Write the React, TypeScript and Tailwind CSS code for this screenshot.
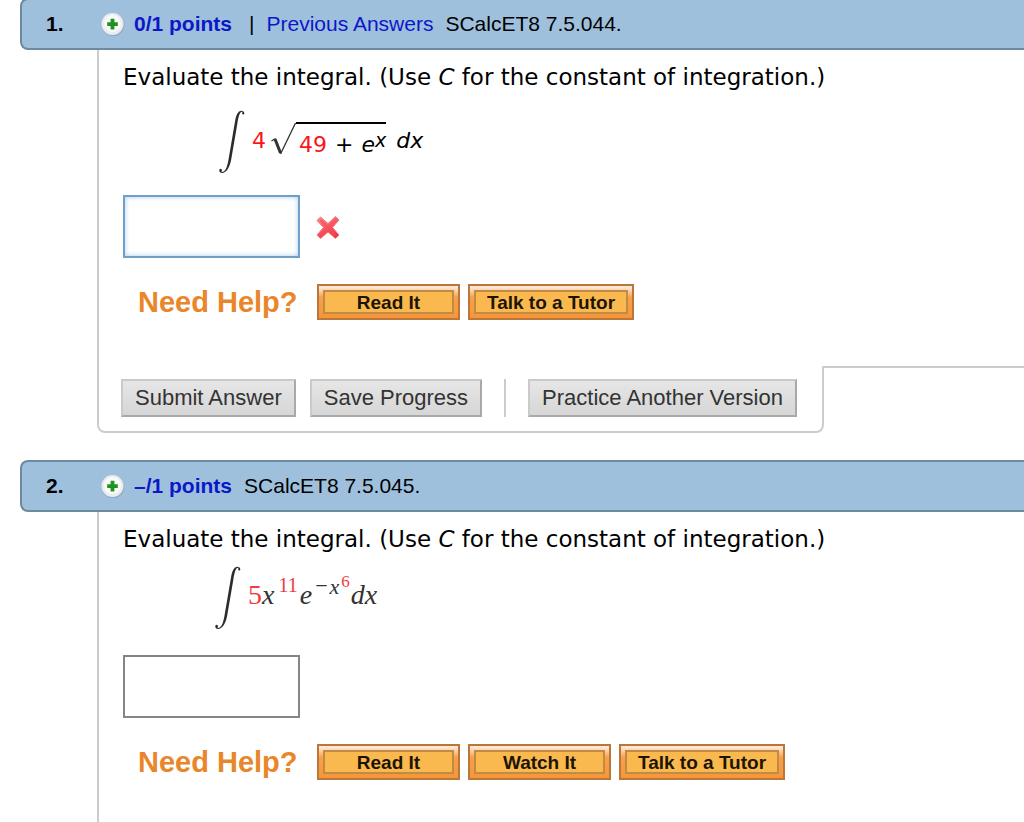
import React from "react";

function PlusBadge({ label }: { label: string }) {
  return (
    <button type="button" aria-label={label} className="block h-6 w-6 shrink-0">
      <svg viewBox="0 0 24 24" className="h-6 w-6">
        <circle cx="12" cy="13" r="11.3" fill="#7e99b0" opacity="0.55" />
        <circle cx="11.5" cy="12" r="11" fill="#ececec" />
        <circle cx="11.5" cy="11.5" r="8.5" fill="#fafafa" />
        <path d="M9.600 6.800h3.800v3.400h3.400v3.800h-3.400v3.400h-3.800v-3.400H6.200v-3.800h3.400z" fill="#1e931e" />
      </svg>
    </button>
  );
}

function Header({ number, children }: { number: string; children: React.ReactNode }) {
  return (
    <header className="ml-5 flex h-[52px] items-center rounded-l-lg border-2 border-r-0 border-[#6e8a9d] bg-[#9fc0dd] text-[21px] whitespace-pre text-black">
      <h2 className="w-[79px] pl-6 font-bold">{number}</h2>
      <PlusBadge label={`Show details for question ${number}`} />
      <div className="flex pl-[9px]">{children}</div>
    </header>
  );
}

function Prompt() {
  return (
    <p className="font-['DejaVu_Sans',sans-serif] text-[23px] leading-[30px] whitespace-nowrap text-black">
      Evaluate the integral. (Use <i>C</i> for the constant of integration.)
    </p>
  );
}

function IntegralSign() {
  return (
    <svg viewBox="0 0 26 64" className="h-16 w-[26px] shrink-0" fill="#2c2c2c">
      <path d="M25.3 3.2C24.8 1.2 23.6.6 22 .8C18.500 1.300 17 6 16 11.500L9.600 49C8.600 55 7.200 60.500 4.300 61.800C3.500 62.100 2.600 61.900 2.400 61.300C3.300 60.700 3.300 59.200 2.100 58.900C.9 58.700.2 59.600.3 60.700C.5 62.400 2.100 63.200 3.900 62.900C8.500 62 10.900 56 12.200 49.500L18.300 14C19.200 8 20.300 3.200 22.200 2C22.800 1.700 23.300 1.700 23.600 2.100C22.900 2.700 22.800 4 23.800 4.400C24.700 4.700 25.300 4.100 25.300 3.200Z" />
    </svg>
  );
}

function RootSign() {
  return (
    <svg viewBox="0 0 25 34" className="h-[34px] w-[25px] shrink-0" fill="none">
      <path d="M.5 19L4.500 16.500" stroke="#333" strokeWidth="1.200" />
      <path d="M4 17L9.500 31" stroke="#333" strokeWidth="3" />
      <path d="M9.500 32L24.500 1" stroke="#333" strokeWidth="1.300" />
    </svg>
  );
}

function WrongMark() {
  return (
    <svg viewBox="0 0 24 26" className="h-[26px] w-6" role="img" aria-label="Incorrect">
      <defs>
        <linearGradient id="wrong" x1="0" y1="0" x2="0.5" y2="1">
          <stop offset="0" stopColor="#ff8e91" />
          <stop offset="1" stopColor="#ee3543" />
        </linearGradient>
      </defs>
      <path
        d="M4.500 3L12 9.500L19.500 2.500L23 6L16.500 13.500L23 21L19.500 24.500L12 18L4.500 24.500L1 21L7.500 13.500L1 6.500Z"
        fill="url(#wrong)"
        stroke="#f4757b"
        strokeLinejoin="round"
      />
      <path d="M5 6.500L19 21M19 6.500L5 21" stroke="#fb4d57" strokeWidth="2.500" strokeLinecap="round" opacity="0.6" />
    </svg>
  );
}

function HelpButton({ children, wide }: { children: string; wide?: boolean }) {
  return (
    <button
      type="button"
      className={`${wide ? "w-[166px]" : "w-[143px]"} h-9 shrink-0 border-2 border-[#b9783a] bg-linear-to-b from-[#fde6d2] from-5% via-[#f7a04a] via-35% to-[#f6963a] p-1`}
    >
      <span className="flex h-full items-center justify-center border-2 border-[#c08b45] bg-[#fab94f] pt-0.5 text-[19px] font-bold whitespace-nowrap text-[#1d1504]">
        {children}
      </span>
    </button>
  );
}

function NeedHelp({ options }: { options: string[] }) {
  return (
    <div className="mt-[26px] flex h-9 items-center gap-2">
      <span className="w-[186px] shrink-0 pl-[15px] text-[29px] leading-9 font-bold text-[#ea862a]">Need Help?</span>
      {options.map((o) => (
        <HelpButton key={o} wide={o === "Talk to a Tutor"}>
          {o}
        </HelpButton>
      ))}
    </div>
  );
}

function ActionButton({ children }: { children: string }) {
  return (
    <button
      type="button"
      className="h-[38px] shrink-0 border-2 border-t-[#c9cbca] border-r-[#a9a9a9] border-b-[#a9a9a9] border-l-[#c9cbca] bg-linear-to-b from-[#e6e6e6] to-[#d6d6d6] px-3 text-[22px] leading-8 whitespace-nowrap text-[#333]"
    >
      {children}
    </button>
  );
}

export default function App() {
  return (
    <main className="overflow-hidden bg-white font-['Liberation_Sans',Arial,sans-serif]">
      <section className="-mt-0.5">
        <Header number="1.">
          <span className="font-bold text-[#0b18c8]">0/1 points</span>
          <span className="pr-3 pl-[17px]">|</span>
          <a href="#previous" className="pr-3 text-[#0b18c8]">Previous Answers</a>
          <span>SCalcET8 7.5.044.</span>
        </Header>

        <div className="ml-[97px] border-l-2 border-[#cbcccc] pt-3 pb-[46px] pl-6">
          <Prompt />
          <div className="flex items-start pt-[18px] pl-24 font-['DejaVu_Sans',sans-serif] text-[22px] leading-[26px] text-black">
            <IntegralSign />
            <span className="pt-[18px] pl-[7px] text-[#fa1420]">4</span>
            <div className="flex pt-3 pl-[5px]">
              <RootSign />
              <div className="flex border-t-2 border-black pt-2 pl-[3px] whitespace-pre">
                <span className="text-[#fa1420]">49</span>
                <span className="px-px"> + </span>
                <i>e</i>
                <i className="-mt-[5px] text-[19px]">x</i>
              </div>
            </div>
            <i className="pt-[18px] pl-[10px]">dx</i>
          </div>
          <div className="mt-[21px] flex items-center gap-4">
            <input
              aria-label="Answer to question 1"
              className="h-[63px] w-[177px] border-2 border-[#709fc7] px-2 text-[22px] shadow-[inset_0_0_5px_#a9cdf0] outline-none"
            />
            <WrongMark />
          </div>
          <NeedHelp options={["Read It", "Talk to a Tutor"]} />
        </div>

        <div className="flex pl-[97px]">
          <div className="flex h-[67px] shrink-0 rounded-b-lg border-2 border-t-0 border-[#cbcccc] pt-[13px] pr-[25px] pl-[22px]">
            <ActionButton>Submit Answer</ActionButton>
            <div className="ml-[14px] flex">
              <ActionButton>Save Progress</ActionButton>
            </div>
            <div className="mx-[22px] h-[38px] border-l-2 border-[#cbcccc]" />
            <ActionButton>Practice Another Version</ActionButton>
          </div>
          <div className="-ml-0.5 flex-1 border-t-2 border-[#cbcccc]" />
        </div>
      </section>

      <section className="mt-[27px]">
        <Header number="2.">
          <span className="pr-3 font-bold text-[#0b18c8]">–/1 points</span>
          <span>SCalcET8 7.5.045.</span>
        </Header>

        <div className="ml-[97px] border-l-2 border-[#cbcccc] pt-3 pb-[42px] pl-6">
          <Prompt />
          <div className="flex items-start pt-3 pl-[92px] font-['Liberation_Serif',serif] text-[28px] leading-8 text-[#333]">
            <IntegralSign />
            <span className="pt-[13px] pl-[7px] text-[#f23a44]">5</span>
            <i className="pt-[13px]">x</i>
            <span className="pt-[7px] pl-1 text-[20px] leading-6 text-[#f23a44]">11</span>
            <i className="pt-[13px] pl-0.5">e</i>
            <span className="pt-2 pl-[3px] text-[22px] leading-6">−</span>
            <i className="pt-[9px] pl-0.5 text-[22px] leading-6">x</i>
            <span className="pt-[6px] pl-0.5 text-[17px] leading-5 text-[#f23a44]">6</span>
            <i className="pt-[13px] pl-px">dx</i>
          </div>
          <input
            aria-label="Answer to question 2"
            className="mt-[25px] block h-[63px] w-[177px] border-2 border-[#858585] px-2 text-[22px] outline-none"
          />
          <NeedHelp options={["Read It", "Watch It", "Talk to a Tutor"]} />
        </div>
      </section>
    </main>
  );
}
